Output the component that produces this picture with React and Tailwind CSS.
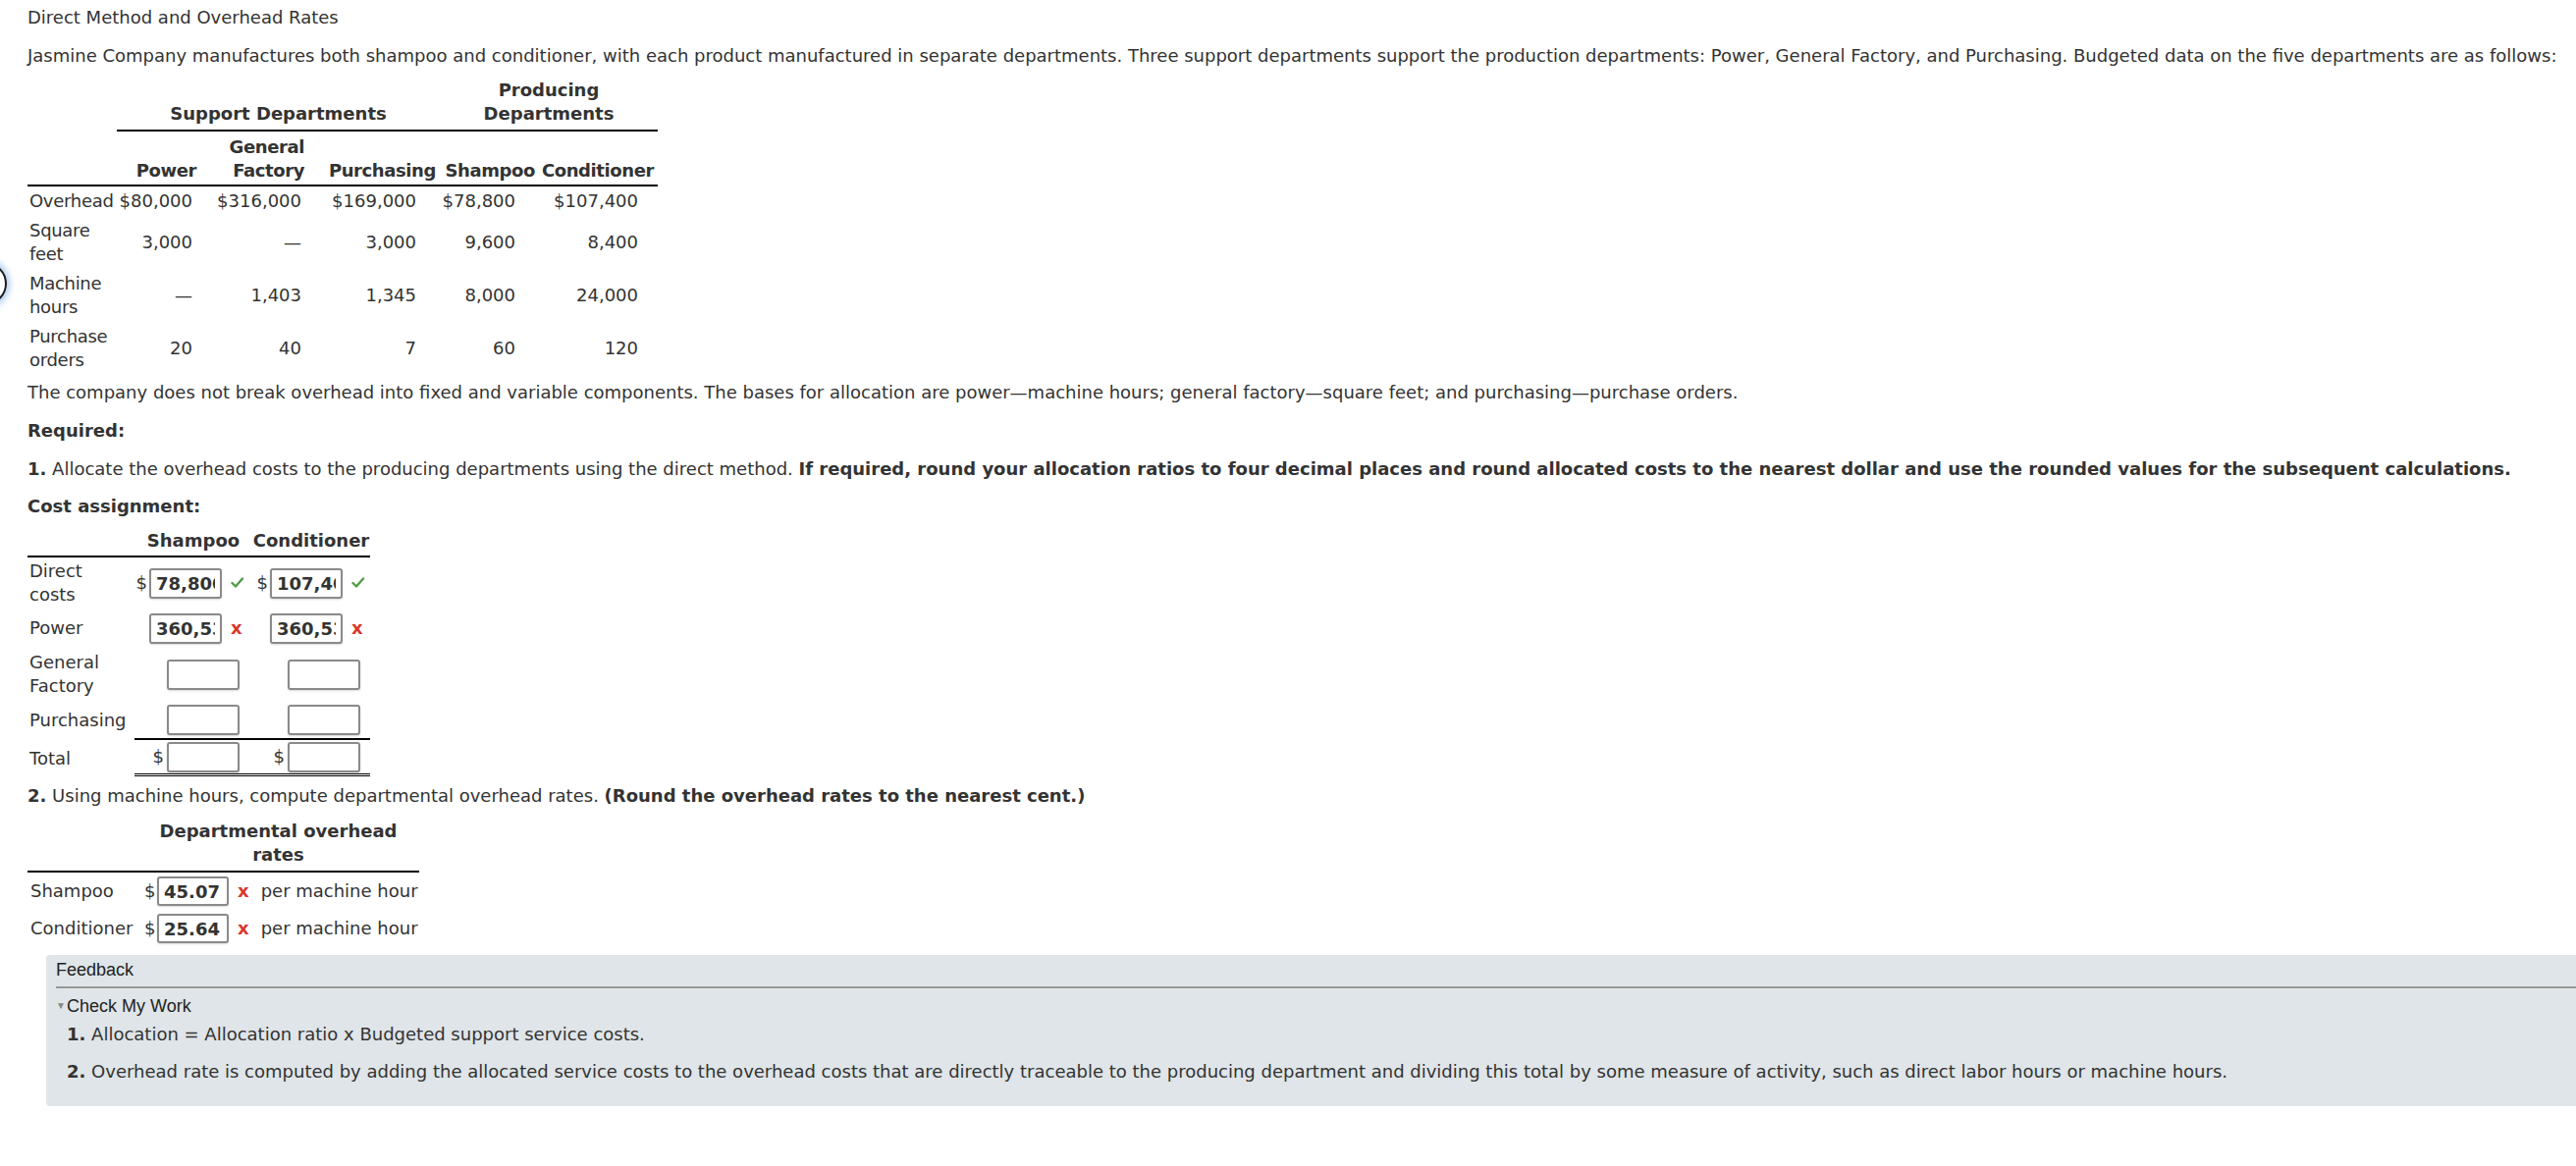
import React from 'react';

const dataPad = ['pr-[8px]', 'pr-[7px]', 'pr-[24px]', 'pr-[24px]', 'pr-[20px]'];

const budget = [
  { label: 'Overhead', one: true, vals: ['$80,000', '$316,000', '$169,000', '$78,800', '$107,400'] },
  { label: ['Square', 'feet'], vals: ['3,000', '—', '3,000', '9,600', '8,400'] },
  { label: ['Machine', 'hours'], vals: ['—', '1,403', '1,345', '8,000', '24,000'] },
  { label: ['Purchase', 'orders'], vals: ['20', '40', '7', '60', '120'] },
];

function Box({ value = '', w = 'w-[74px]', h = 'h-[31px]' }) {
  return (
    <input
      readOnly
      value={value}
      className={`${w} ${h} border-2 border-[#8a8a8a] rounded-[3px] bg-white pl-[5px] pr-[5px] py-0 font-bold text-[18px] text-[#333] outline-none shadow-[0_1px_2px_rgba(0,0,0,0.15)] font-['DejaVu_Sans',sans-serif]`}
    />
  );
}

const Check = () => (
  <svg className="ml-[9px]" width="14" height="12" viewBox="0 0 14 12">
    <polyline points="1.5,6 5,9.5 12,1.5" fill="none" stroke="#4f9d47" strokeWidth="2.4" strokeLinecap="round" strokeLinejoin="round" />
  </svg>
);
const Cross = () => <span className="ml-[9px] w-[14px] text-[#d9382c] font-bold text-[18px] leading-none">x</span>;

export default function App() {
  return (
    <div className="relative overflow-hidden min-h-[1188px] bg-white pl-[28px] text-[18px] leading-[24px] text-[#333] font-['DejaVu_Sans',sans-serif]">
      {/* scroll handle peeking at the left edge */}
      <div className="absolute left-[-37px] top-[267px] w-[44px] h-[44px] rounded-full border-[2.5px] border-[#1a1a1a] shadow-[0_0_6px_3px_rgba(120,170,230,0.6)]" />

      <div className="pt-[6px]">Direct Method and Overhead Rates</div>
      <p className="mt-[15px] whitespace-nowrap">
        Jasmine Company manufactures both shampoo and conditioner, with each product manufactured in separate departments. Three support departments support the production departments: Power, General Factory, and Purchasing. Budgeted data on the five departments are as follows:
      </p>

      {/* Budget table */}
      <div className="mt-[11px] grid w-[642px] grid-cols-[91px_85px_110px_134px_101px_121px]">
        <div />
        <div className="col-span-3 flex items-end justify-center border-b-2 border-black pb-[4px] font-bold">Support Departments</div>
        <div className="col-span-2 flex items-end justify-center border-b-2 border-black pb-[4px] text-center font-bold">
          Producing<br />Departments
        </div>

        <div className="border-b-2 border-black" />
        <div className="flex items-end justify-end border-b-2 border-black pt-[4px] pb-[2px] pr-[4px] font-bold tracking-[-0.4px]">Power</div>
        <div className="flex items-end justify-end border-b-2 border-black pt-[4px] pb-[2px] pr-[4px] text-right font-bold tracking-[-0.4px]">
          General<br />Factory
        </div>
        <div className="flex items-end justify-end border-b-2 border-black pt-[4px] pb-[2px] pr-[4px] font-bold tracking-[-0.4px]">Purchasing</div>
        <div className="flex items-end justify-end border-b-2 border-black pt-[4px] pb-[2px] pr-[4px] font-bold tracking-[-0.4px]">Shampoo</div>
        <div className="flex items-end justify-end border-b-2 border-black pt-[4px] pb-[2px] pr-[4px] font-bold tracking-[-0.4px]">Conditioner</div>

        {budget.map((row) => (
          <React.Fragment key={row.vals.join()}>
            <div className="pl-[2px] py-[3px] whitespace-nowrap tracking-[-0.3px]">
              {row.one ? row.label : (<>{row.label[0]}<br />{row.label[1]}</>)}
            </div>
            {row.vals.map((v, i) => (
              <div key={i} className={`flex items-center justify-end py-[3px] ${dataPad[i]}`}>{v}</div>
            ))}
          </React.Fragment>
        ))}
      </div>

      <p className="mt-[6px] whitespace-nowrap">
        The company does not break overhead into fixed and variable components. The bases for allocation are power—machine hours; general factory—square feet; and purchasing—purchase orders.
      </p>
      <p className="mt-[15px] font-bold">Required:</p>
      <p className="mt-[15px] whitespace-nowrap">
        <b>1.</b> Allocate the overhead costs to the producing departments using the direct method.{' '}
        <b>If required, round your allocation ratios to four decimal places and round allocated costs to the nearest dollar and use the rounded values for the subsequent calculations.</b>
      </p>
      <p className="mt-[14px] font-bold">Cost assignment:</p>

      {/* Cost assignment table */}
      <div className="mt-[9px] grid w-[349px] grid-cols-[109px_120px_120px]">
        <div className="border-b-2 border-black" />
        <div className="border-b-2 border-black pt-[2px] pb-[3px] text-center font-bold">Shampoo</div>
        <div className="border-b-2 border-black pt-[2px] pb-[3px] text-center font-bold">Conditioner</div>

        <div className="flex min-h-[40px] items-center py-[2px] pl-[2px]">Direct<br />costs</div>
        <div className="flex items-center justify-end pr-[8px]">
          <span className="mr-[2px]">$</span><Box value="78,800" /><Check />
        </div>
        <div className="flex items-center justify-end pr-[5px]">
          <span className="mr-[2px]">$</span><Box value="107,400" /><Check />
        </div>

        <div className="flex min-h-[40px] items-center py-[2px] pl-[2px]">Power</div>
        <div className="flex items-center justify-end pr-[8px]">
          <Box value="360,533" /><Cross />
        </div>
        <div className="flex items-center justify-end pr-[5px]">
          <Box value="360,533" /><Cross />
        </div>

        <div className="flex min-h-[40px] items-center py-[3px] pl-[2px]">General<br />Factory</div>
        <div className="flex items-center justify-end pr-[13px]"><Box /></div>
        <div className="flex items-center justify-end pr-[10px]"><Box /></div>

        <div className="flex min-h-[40px] items-center py-[2px] pl-[2px]">Purchasing</div>
        <div className="flex items-center justify-end border-b-2 border-black pr-[13px]"><Box /></div>
        <div className="flex items-center justify-end border-b-2 border-black pr-[10px]"><Box /></div>

        <div className="flex min-h-[37px] items-center pl-[2px]">Total</div>
        <div className="flex items-center justify-end border-b-[3px] border-double border-black pr-[13px]">
          <span className="mr-[3px]">$</span><Box />
        </div>
        <div className="flex items-center justify-end border-b-[3px] border-double border-black pr-[10px]">
          <span className="mr-[3px]">$</span><Box />
        </div>
      </div>

      <p className="mt-[8px] whitespace-nowrap">
        <b>2.</b> Using machine hours, compute departmental overhead rates. <b>(Round the overhead rates to the nearest cent.)</b>
      </p>

      {/* Rates table */}
      <div className="mt-[12px] grid w-[399px] grid-cols-[112px_287px]">
        <div className="border-b-2 border-black" />
        <div className="border-b-2 border-black pb-[4px] text-center font-bold">
          Departmental overhead<br />rates
        </div>
        {[
          ['Shampoo', '45.07'],
          ['Conditioner', '25.64'],
        ].map(([name, rate]) => (
          <React.Fragment key={name}>
            <div className="flex h-[38px] items-center pl-[3px]">{name}</div>
            <div className="flex h-[38px] items-center">
              <span className="ml-[7px] w-[10px]">$</span>
              <span className="ml-[3px] flex"><Box value={rate} w="w-[73px]" h="h-[30px]" /></span>
              <span className="ml-[9px] text-[#d9382c] font-bold">x</span>
              <span className="ml-[12px]">per machine hour</span>
            </div>
          </React.Fragment>
        ))}
      </div>

      {/* Feedback */}
      <div className="mt-[8px] ml-[19px] -mr-[10px] rounded-[4px] bg-[#dfe5e8] pl-[10px] pt-[5px] pb-[23px]">
        <div className="border-b-2 border-[#999] pb-[7px] font-['Liberation_Sans',Arial,sans-serif] text-[18px] leading-[20px] text-[#222]">Feedback</div>
        <div className="mt-[8px] flex items-center font-['Liberation_Sans',Arial,sans-serif] text-[18px] leading-[20px] text-[#222]">
          <span className="w-[11px] text-[10px] text-[#888]">▼</span>Check My Work
        </div>
        <div className="pl-[11px]">
          <p className="mt-[7px] whitespace-nowrap"><b>1.</b> Allocation = Allocation ratio x Budgeted support service costs.</p>
          <p className="mt-[14px] whitespace-nowrap">
            <b>2.</b> Overhead rate is computed by adding the allocated service costs to the overhead costs that are directly traceable to the producing department and dividing this total by some measure of activity, such as direct labor hours or machine hours.
          </p>
        </div>
      </div>
    </div>
  );
}
